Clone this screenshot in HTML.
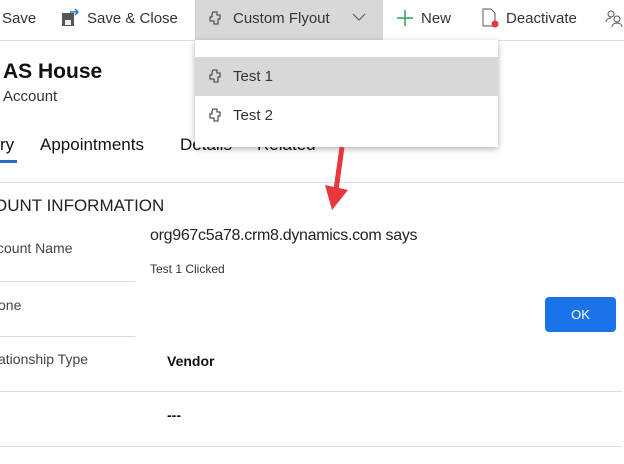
<!DOCTYPE html>
<html><head><style>
*{margin:0;padding:0;box-sizing:border-box}
body{width:624px;height:464px;overflow:hidden;background:#fff;font-family:"Liberation Sans",sans-serif;color:#222;position:relative}
.a{position:absolute;white-space:nowrap}
.tb{font-size:15px;color:#333}
</style></head><body>
<div class="a" style="left:0;top:0;width:624px;height:41px;border-bottom:1px solid #ddd"></div>
<div class="a" style="left:195px;top:0;width:188px;height:40px;background:#d8d8d8"></div>
<div class="a tb" style="left:2px;top:10px">Save</div>
<svg class="a" style="left:60px;top:8px" width="20" height="20"><rect x="2" y="5" width="12" height="13" fill="#555"/><rect x="5" y="12" width="6" height="5" fill="#eee"/><path d="M10 4h8M15 1l3 3-3 3" stroke="#2a7ad5" stroke-width="1.5" fill="none"/></svg>
<div class="a tb" style="left:87px;top:10px">Save &amp; Close</div>
<svg class="a" style="left:207px;top:10px" width="16" height="16"><path d="M6 2h4v3h3v4h-2v5H7v-3H3V7h2V4z" stroke="#555" fill="none" stroke-width="1.3" stroke-linejoin="round"/></svg>
<div class="a tb" style="left:233px;top:10px">Custom Flyout</div>
<svg class="a" style="left:352px;top:12px" width="14" height="10"><path d="M1 2l6 6 6-6" stroke="#555" fill="none"/></svg>
<svg class="a" style="left:396px;top:9px" width="18" height="18"><path d="M9 1v16M1 9h16" stroke="#2e9e4e" stroke-width="1.5"/></svg>
<div class="a tb" style="left:421px;top:10px">New</div>
<svg class="a" style="left:481px;top:8px" width="18" height="20"><path d="M2 1h8l4 4v13H2z" stroke="#555" fill="none"/><circle cx="14" cy="16" r="3.5" fill="#e03b3b"/></svg>
<div class="a tb" style="left:506px;top:10px">Deactivate</div>
<svg class="a" style="left:605px;top:8px" width="18" height="20"><circle cx="6" cy="6" r="3" stroke="#555" fill="none"/><circle cx="12" cy="11" r="3" stroke="#555" fill="none"/><path d="M1 14c0-3 3-4 5-4M7 19c0-3 3-4 5-4s5 1 5 4" stroke="#555" fill="none"/></svg>

<div class="a" style="left:3px;top:60px;font-size:21px;font-weight:bold;color:#111">AS House</div>
<div class="a" style="left:3px;top:88px;font-size:15px;color:#333">Account</div>
<div class="a" style="left:0;top:135px;font-size:17px;color:#111">ry</div>
<div class="a" style="left:40px;top:135px;font-size:17px;color:#111">Appointments</div>
<div class="a" style="left:180px;top:135px;font-size:17px;color:#111">Details</div>
<div class="a" style="left:257px;top:135px;font-size:17px;color:#111">Related</div>
<div class="a" style="left:0;top:160px;width:17px;height:3px;background:#2a6cc4"></div>
<div class="a" style="left:0;top:182px;width:624px;height:1px;background:#ddd"></div>

<div class="a" style="left:195px;top:40px;width:303px;height:107px;background:#fff;box-shadow:0 2px 6px rgba(0,0,0,.3)"></div>
<div class="a" style="left:195px;top:57px;width:303px;height:39px;background:#d8d8d8"></div>
<svg class="a" style="left:207px;top:68px" width="16" height="16"><path d="M6 2h4v3h3v4h-2v5H7v-3H3V7h2V4z" stroke="#555" fill="none" stroke-width="1.3" stroke-linejoin="round"/></svg>
<div class="a" style="left:233px;top:68px;font-size:15px;color:#333">Test 1</div>
<svg class="a" style="left:207px;top:107px" width="16" height="16"><path d="M6 2h4v3h3v4h-2v5H7v-3H3V7h2V4z" stroke="#555" fill="none" stroke-width="1.3" stroke-linejoin="round"/></svg>
<div class="a" style="left:233px;top:107px;font-size:15px;color:#333">Test 2</div>

<svg class="a" style="left:320px;top:145px" width="36" height="70"><path d="M22 2L16 45" stroke="#e8383d" stroke-width="5"/><path d="M5 40L12 65L28 45z" fill="#e8383d"/></svg>

<div class="a" style="left:-6px;top:196px;font-size:17px;color:#222">OUNT INFORMATION</div>
<div class="a" style="left:-3px;top:240px;font-size:14px;color:#444">count Name</div>
<div class="a" style="left:0;top:281px;width:135px;height:1px;background:#ddd"></div>
<div class="a" style="left:-2px;top:297px;font-size:14px;color:#444">one</div>
<div class="a" style="left:0;top:336px;width:135px;height:1px;background:#ddd"></div>
<div class="a" style="left:-2px;top:351px;font-size:14px;color:#444">ationship Type</div>
<div class="a" style="left:167px;top:353px;font-size:14px;font-weight:bold;color:#111">Vendor</div>
<div class="a" style="left:0;top:391px;width:622px;height:1px;background:#ddd"></div>
<div class="a" style="left:167px;top:407px;font-size:14px;font-weight:bold;color:#111">---</div>
<div class="a" style="left:0;top:446px;width:622px;height:1px;background:#ddd"></div>

<div class="a" style="left:150px;top:227px;font-size:16px;color:#222;letter-spacing:-0.3px">org967c5a78.crm8.dynamics.com says</div>
<div class="a" style="left:150px;top:262px;font-size:12px;color:#333">Test 1 Clicked</div>
<div class="a" style="left:545px;top:297px;width:71px;height:35px;background:#1a73e8;border-radius:4px;color:#fff;font-size:13px;text-align:center;line-height:35px">OK</div>
</body></html>
